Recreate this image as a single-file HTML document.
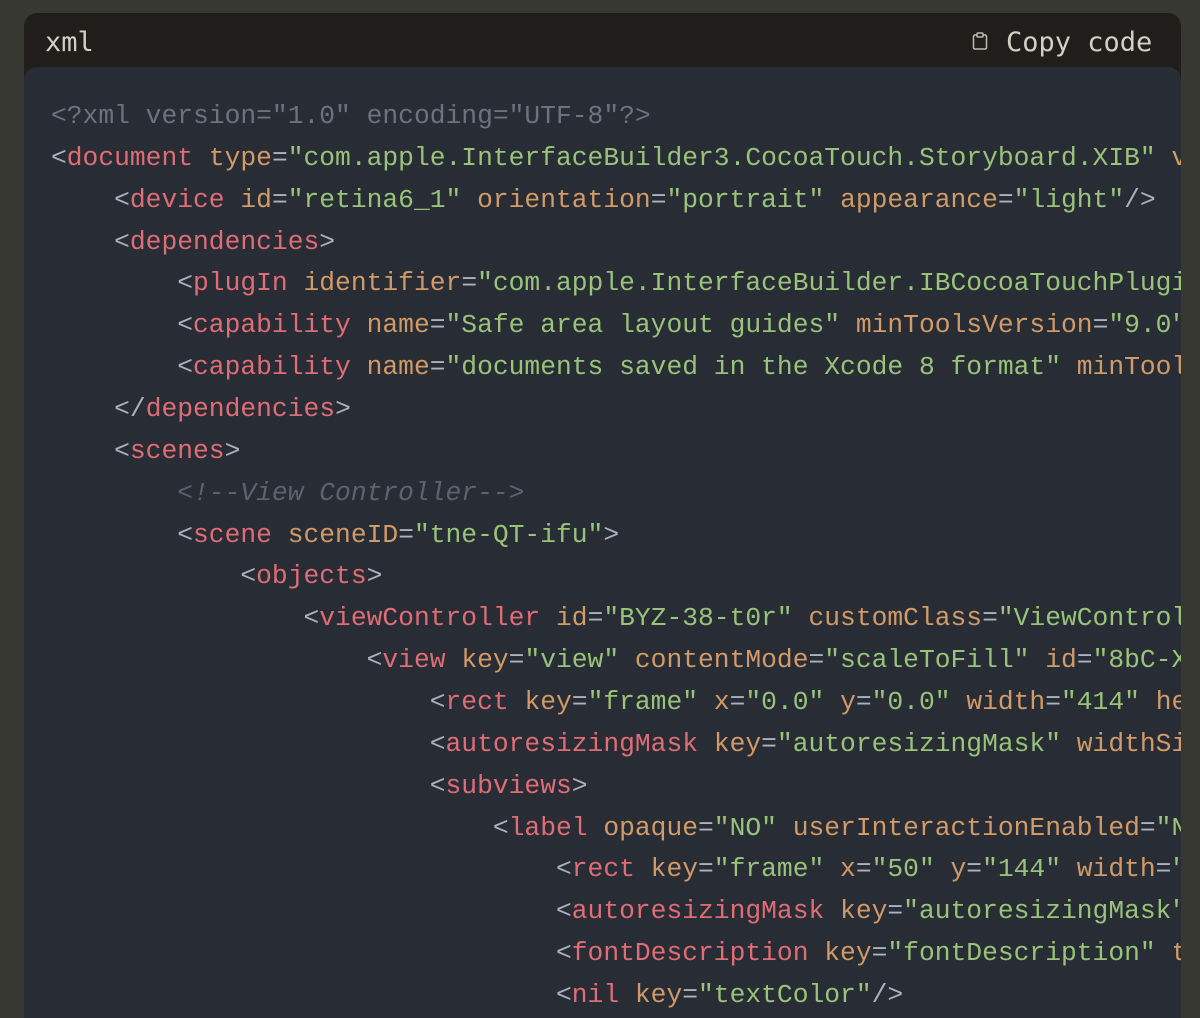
<!DOCTYPE html>
<html><head><meta charset="utf-8"><style>
html,body{margin:0;padding:0;width:1200px;height:1018px;overflow:hidden;background:#383833;}
.box{position:absolute;left:24px;top:13px;width:1157px;height:1005px;background:#1f1e1b;border-radius:13px 13px 0 0;overflow:hidden;}
.hdr{height:54px;position:relative;font-family:"DejaVu Sans Mono","Liberation Mono",monospace;color:#d2d0c6;font-size:27px;line-height:27px;}
.hdr .l{position:absolute;left:21px;top:16px;}
.hdr .r{position:absolute;left:982px;top:16px;}
.hdr svg{position:absolute;left:948px;top:19px;}
.code{position:absolute;top:54px;left:0;right:0;bottom:0;background:#282c35;border-radius:13px 13px 0 0;}
pre{margin:0;padding:29px 0 0 27px;font-family:"Liberation Mono",monospace;font-size:26.3px;line-height:41.86px;color:#abb2bf;white-space:pre;}
.t{color:#e06c75}.a{color:#d19a66}.s{color:#98c379}.c{color:#5c6370;font-style:italic}.g{color:#6b7280}
</style></head><body>
<div class="box">
<div class="hdr"><span class="l">xml</span><svg width="16" height="18" viewBox="0 0 16 18"><rect x="1.5" y="3" width="13" height="14" rx="1.5" fill="none" stroke="#bdbbb2" stroke-width="1.5"/><rect x="5" y="1" width="6" height="4" rx="1" fill="#1f1e1b" stroke="#bdbbb2" stroke-width="1.5"/></svg><span class="r">Copy code</span></div>
<div class="code"><pre><span class="g">&lt;?xml version="1.0" encoding="UTF-8"?&gt;</span>
&lt;<span class="t">document</span> <span class="a">type</span>=<span class="s">"com.apple.InterfaceBuilder3.CocoaTouch.Storyboard.XIB"</span> <span class="a">version</span>=<span class="s">"3.0"</span>
    &lt;<span class="t">device</span> <span class="a">id</span>=<span class="s">"retina6_1"</span> <span class="a">orientation</span>=<span class="s">"portrait"</span> <span class="a">appearance</span>=<span class="s">"light"</span>/&gt;
    &lt;<span class="t">dependencies</span>&gt;
        &lt;<span class="t">plugIn</span> <span class="a">identifier</span>=<span class="s">"com.apple.InterfaceBuilder.IBCocoaTouchPlugin"</span>
        &lt;<span class="t">capability</span> <span class="a">name</span>=<span class="s">"Safe area layout guides"</span> <span class="a">minToolsVersion</span>=<span class="s">"9.0"</span>/&gt;
        &lt;<span class="t">capability</span> <span class="a">name</span>=<span class="s">"documents saved in the Xcode 8 format"</span> <span class="a">minToolsVersion</span>
    &lt;/<span class="t">dependencies</span>&gt;
    &lt;<span class="t">scenes</span>&gt;
        <span class="c">&lt;!--View Controller--&gt;</span>
        &lt;<span class="t">scene</span> <span class="a">sceneID</span>=<span class="s">"tne-QT-ifu"</span>&gt;
            &lt;<span class="t">objects</span>&gt;
                &lt;<span class="t">viewController</span> <span class="a">id</span>=<span class="s">"BYZ-38-t0r"</span> <span class="a">customClass</span>=<span class="s">"ViewController"</span>
                    &lt;<span class="t">view</span> <span class="a">key</span>=<span class="s">"view"</span> <span class="a">contentMode</span>=<span class="s">"scaleToFill"</span> <span class="a">id</span>=<span class="s">"8bC-Xf-vdC"</span>
                        &lt;<span class="t">rect</span> <span class="a">key</span>=<span class="s">"frame"</span> <span class="a">x</span>=<span class="s">"0.0"</span> <span class="a">y</span>=<span class="s">"0.0"</span> <span class="a">width</span>=<span class="s">"414"</span> <span class="a">height</span>=<span class="s">"896"</span>
                        &lt;<span class="t">autoresizingMask</span> <span class="a">key</span>=<span class="s">"autoresizingMask"</span> <span class="a">widthSizable</span>=<span class="s">"YES"</span>
                        &lt;<span class="t">subviews</span>&gt;
                            &lt;<span class="t">label</span> <span class="a">opaque</span>=<span class="s">"NO"</span> <span class="a">userInteractionEnabled</span>=<span class="s">"NO"</span>
                                &lt;<span class="t">rect</span> <span class="a">key</span>=<span class="s">"frame"</span> <span class="a">x</span>=<span class="s">"50"</span> <span class="a">y</span>=<span class="s">"144"</span> <span class="a">width</span>=<span class="s">"314"</span>
                                &lt;<span class="t">autoresizingMask</span> <span class="a">key</span>=<span class="s">"autoresizingMask"</span> <span class="a">flexible</span>
                                &lt;<span class="t">fontDescription</span> <span class="a">key</span>=<span class="s">"fontDescription"</span> <span class="a">type</span>=<span class="s">"system"</span>
                                &lt;<span class="t">nil</span> <span class="a">key</span>=<span class="s">"textColor"</span>/&gt;
</pre></div>
</div>
</body></html>
